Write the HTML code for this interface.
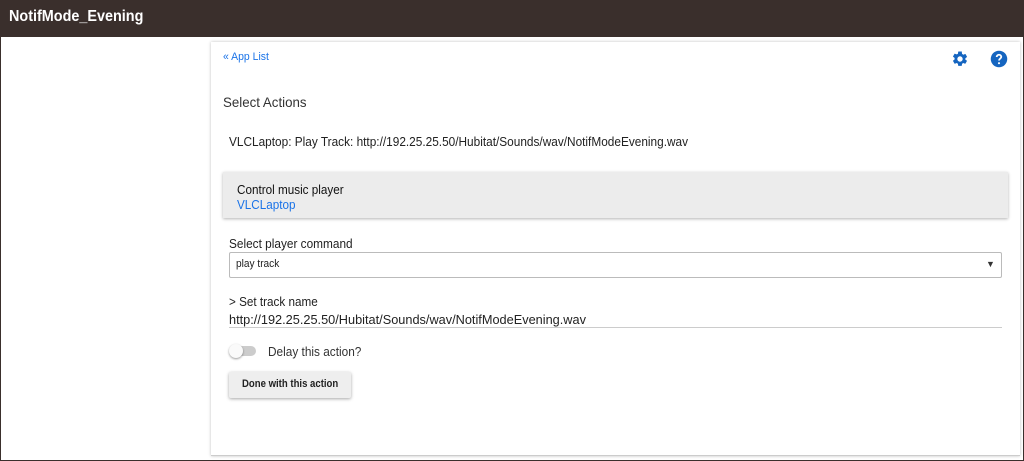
<!DOCTYPE html>
<html><head><style>
*{margin:0;padding:0;box-sizing:border-box}
body{width:1024px;height:461px;overflow:hidden;background:#fff;font-family:"Liberation Sans",sans-serif;position:relative;border:1px solid #3a2f2c;border-top:none}
.a{position:absolute;white-space:nowrap;transform-origin:left center}
</style></head><body>
<div class="a" style="left:0;top:0;width:1024px;height:37px;background:#3a2f2c"></div>
<div class="a" style="left:8px;top:8px;color:#fff;font-weight:bold;font-size:16px;transform:scaleX(.9)">NotifMode_Evening</div>
<div class="a" style="left:210px;top:42px;width:809px;height:414px;box-shadow:0 0 3px rgba(0,0,0,.25);border-bottom:1px solid #ccc"></div>
<div class="a" style="left:222px;top:51px;font-size:11px;color:#1a73e8;transform:scaleX(.95)">« App List</div>
<svg class="a" style="left:950px;top:50px" width="18" height="18" viewBox="0 0 24 24"><path fill="#1565c0" d="M19.14 12.94c.04-.3.06-.61.06-.94s-.02-.64-.07-.94l2.030-1.58a.49.49 0 0 0 .12-.61l-1.920-3.32a.49.49 0 0 0-.59-.22l-2.390.96a7 7 0 0 0-1.620-.94l-.36-2.54A.48.48 0 0 0 13.92 2h-3.84a.48.48 0 0 0-.48.41l-.36 2.54c-.59.24-1.13.57-1.62.94l-2.39-.96a.48.48 0 0 0-.59.22L2.72 8.47a.47.47 0 0 0 .12.61l2.03 1.58c-.05.3-.09.63-.09.94s.02.64.07.94l-2.03 1.58a.49.49 0 0 0-.12.61l1.92 3.32c.12.22.37.29.59.22l2.39-.96c.5.38 1.03.7 1.62.94l.36 2.54c.05.24.24.41.48.41h3.84c.24 0 .44-.17.47-.41l.36-2.54c.59-.24 1.13-.56 1.62-.94l2.39.96c.22.08.47 0 .59-.22l1.92-3.32a.47.47 0 0 0-.12-.61zM12 15.6A3.6 3.6 0 1 1 12 8.4a3.6 3.6 0 0 1 0 7.2z"/></svg>
<svg class="a" style="left:989px;top:50px" width="18" height="18" viewBox="0 0 24 24"><circle cx="12" cy="12" r="11" fill="#1565c0"/><path d="M9 9.3a3 3 0 0 1 6 0c0 2-3 2.3-3 4.7" stroke="#fff" stroke-width="2.4" fill="none"/><circle cx="12" cy="17.6" r="1.4" fill="#fff"/></svg>
<div class="a" style="left:222px;top:94px;font-size:14px;color:#333;transform:scaleX(.95)">Select Actions</div>
<div class="a" style="left:228px;top:134px;font-size:13px;color:#222;transform:scaleX(.91)">VLCLaptop: Play Track: http://192.25.25.50/Hubitat/Sounds/wav/NotifModeEvening.wav</div>
<div class="a" style="left:222px;top:172px;width:785px;height:46px;background:#ececec;box-shadow:0 1px 3px rgba(0,0,0,.3)"></div>
<div class="a" style="left:236px;top:182px;font-size:13px;color:#111;transform:scaleX(.9)">Control music player</div>
<div class="a" style="left:236px;top:197px;font-size:13px;color:#1a73e8;transform:scaleX(.9)">VLCLaptop</div>
<div class="a" style="left:228px;top:236px;font-size:13px;color:#222;transform:scaleX(.91)">Select player command</div>
<div class="a" style="left:228px;top:252px;width:773px;height:26px;border:1px solid #bbb;border-radius:2px"></div>
<div class="a" style="left:235px;top:258px;font-size:11px;color:#222;transform:scaleX(.92)">play track</div>
<div class="a" style="left:985px;top:259px;font-size:9px;color:#333">▼</div>
<div class="a" style="left:228px;top:294px;font-size:13px;color:#222;transform:scaleX(.9)">&gt; Set track name</div>
<div class="a" style="left:228px;top:312px;font-size:13px;color:#222;transform:scaleX(.98)">http://192.25.25.50/Hubitat/Sounds/wav/NotifModeEvening.wav</div>
<div class="a" style="left:228px;top:327px;width:773px;height:1px;background:#ccc"></div>
<div class="a" style="left:233px;top:346px;width:22px;height:10px;border-radius:5px;background:#ccc"></div>
<div class="a" style="left:228px;top:344px;width:14px;height:14px;border-radius:50%;background:#fafafa;box-shadow:0 1px 2px rgba(0,0,0,.4)"></div>
<div class="a" style="left:267px;top:344px;font-size:13px;color:#333;transform:scaleX(.91)">Delay this action?</div>
<div class="a" style="left:228px;top:372px;width:122px;height:26px;background:#eee;box-shadow:0 1px 3px rgba(0,0,0,.35);border-radius:2px"></div>
<div class="a" style="left:241px;top:378px;font-size:11px;font-weight:bold;color:#222;transform:scaleX(.87)">Done with this action</div>
</body></html>
